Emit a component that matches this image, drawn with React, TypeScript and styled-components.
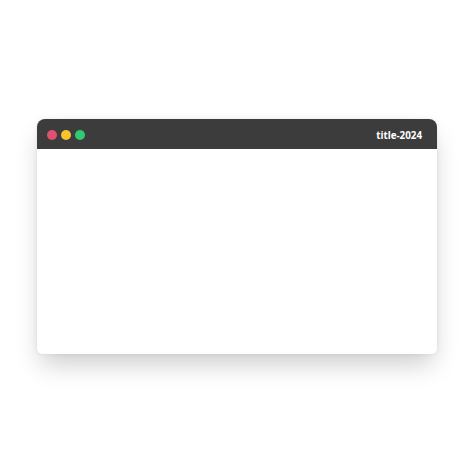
import React from "react";
import styled, { createGlobalStyle } from "styled-components";

const GlobalStyle = createGlobalStyle`
  html, body {
    margin: 0;
    padding: 0;
    background: #ffffff;
  }
`;

const lights = ["#e2506f", "#f7c52b", "#2fcb73"];

export default function App() {
  return (
    <>
      <GlobalStyle />
      <Page>
        <Window>
          <TitleBar>
            <Lights>
              {lights.map((c) => (
                <Light key={c} color={c} />
              ))}
            </Lights>
            <Title>title-2024</Title>
          </TitleBar>
          <Content />
        </Window>
      </Page>
    </>
  );
}

const Page = styled.div`
  width: 474px;
  height: 474px;
  box-sizing: border-box;
  padding: 119px 37px 0 37px;
`;

const Window = styled.div`
  width: 400px;
  height: 235px;
  display: flex;
  flex-direction: column;
  border-radius: 8px 8px 6px 6px;
  overflow: hidden;
  background: #ffffff;
  box-shadow: 0 14px 26px -4px rgba(0, 0, 0, 0.2), 0 0 5px rgba(0, 0, 0, 0.07);
`;

const TitleBar = styled.div`
  height: 30px;
  flex: none;
  display: flex;
  align-items: center;
  justify-content: space-between;
  padding: 0 15px 0 9.5px;
  background: #3c3c3c;
`;

const Lights = styled.div`
  display: flex;
  gap: 4px;
  margin-top: 1px;
`;

const Light = styled.span<{ color: string }>`
  width: 10px;
  height: 10px;
  border-radius: 50%;
  background: ${(p) => p.color};
`;

const Title = styled.span`
  font-family: "Open Sans", "Liberation Sans", sans-serif;
  font-weight: 700;
  font-size: 9.8px;
  color: #ffffff;
  margin-top: 3px;
`;

const Content = styled.div`
  flex: 1;
  background: #ffffff;
`;
